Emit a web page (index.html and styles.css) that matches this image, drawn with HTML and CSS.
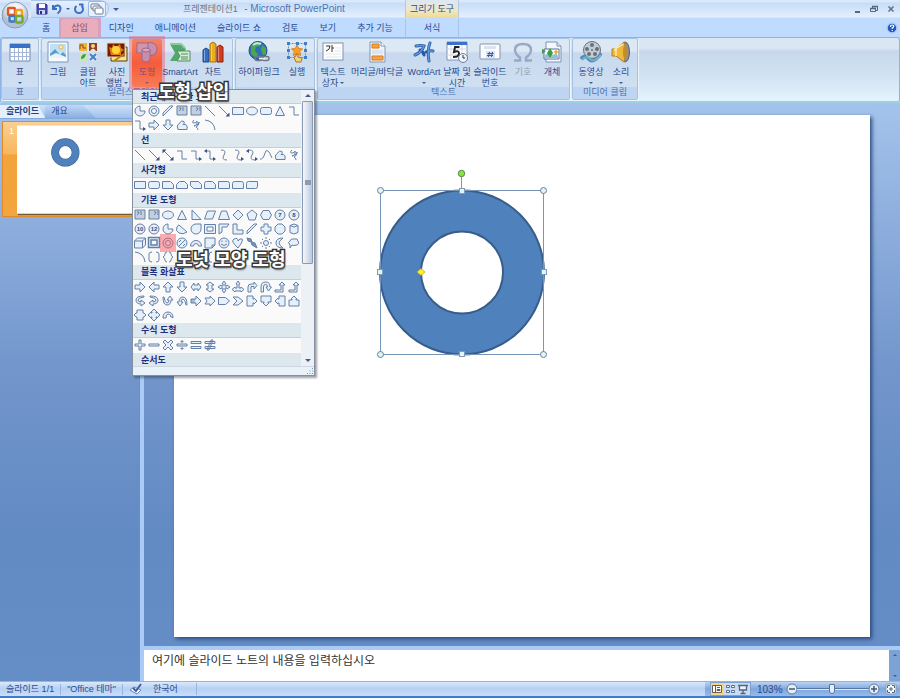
FILE: index.html
```html
<!DOCTYPE html>
<html lang="ko">
<head>
<meta charset="utf-8">
<title>프레젠테이션1 - Microsoft PowerPoint</title>
<link rel="stylesheet" href="styles.css">
</head>
<body>
<header class="titlebar">
  <button class="office" aria-label="Office 단추">
    <svg viewBox="0 0 28 28"><defs><radialGradient id="orb" cx=".5" cy=".3"><stop offset="0" stop-color="#fff"/><stop offset=".6" stop-color="#e9ecf2"/><stop offset="1" stop-color="#b4bfd0"/></radialGradient></defs><circle cx="14" cy="14" r="13" fill="url(#orb)" stroke="#8a9cb9"/><g fill="none" stroke-width="2.4"><rect x="7" y="7" width="7" height="7" rx="1" stroke="#e2571d"/><rect x="15" y="9" width="6" height="6" rx="1" stroke="#f2a120"/><rect x="8.500" y="15" width="5.500" height="5.500" rx="1" stroke="#3c79c9"/><rect x="15" y="15" width="6.500" height="6.500" rx="1" stroke="#6aae34"/></g></svg>
  </button>
  <div class="quick">
    <button aria-label="저장"><svg viewBox="0 0 12 12"><path d="M1 1h9l1 1v9H1z" fill="#4547b2" stroke="#303087"/><path d="M3 1h6v4H3z" fill="#fff"/><path d="M3 7h6v4H3z" fill="#c9d3ef"/><path d="M4 8h2v3H4z" fill="#303087"/></svg></button>
    <button aria-label="실행 취소"><svg viewBox="0 0 12 12"><path d="M2 2v4h4M2.500 5.500C5 1 10 2 9.500 6q-.3 3-3 4.500" fill="none" stroke="#3d6fc4" stroke-width="2"/></svg></button>
    <i class="arrow"></i>
    <button aria-label="다시 실행"><svg viewBox="0 0 12 12"><path d="M3.500 3A4 4 0 1 0 8.500 3M6 1.500h3.500V5" fill="none" stroke="#3d6fc4" stroke-width="2"/></svg></button>
    <button class="boxed" aria-label="도형 순서"><svg viewBox="0 0 14 12"><g fill="#fff" stroke="#687b99"><rect x="1" y="1" width="8" height="5" rx="1"/><rect x="3" y="3" width="8" height="5" rx="1"/><rect x="5" y="5" width="8" height="6" rx="1"/></g></svg></button>
  </div>
  <i class="arrow more"></i>
  <h1>프레젠테이션1 <span>- Microsoft PowerPoint</span></h1>
  <div class="window">
    <button aria-label="최소화"><svg viewBox="0 0 10 10"><path d="M3 8h5" stroke="#56677f" stroke-width="2"/></svg></button>
    <button aria-label="이전 크기로"><svg viewBox="0 0 10 10"><path d="M3.500 4V2.500h5v4H7M1.500 4.500h5v3h-5z" fill="none" stroke="#56677f"/><path d="M1 4.500h6M3 2.500h6" stroke="#56677f" stroke-width="1.500"/></svg></button>
    <button aria-label="닫기"><svg viewBox="0 0 10 10"><path d="M2.500 2.500l5 5m0-5l-5 5" stroke="#62738b" stroke-width="1.600"/></svg></button>
  </div>
</header>
<nav class="tabs">
  <button>홈</button><button class="active">삽입</button><button>디자인</button><button>애니메이션</button><button>슬라이드 쇼</button><button>검토</button><button>보기</button><button>추가 기능</button><button class="context"><span>그리기 도구</span>서식</button>
  <button class="help" aria-label="도움말"><svg viewBox="0 0 12 12"><circle cx="6" cy="6" r="5" fill="#1d59c8" stroke="#b9cbea" stroke-width="1.500"/><path d="M4.500 5q0-2 1.700-2t1.500 1.500Q7.500 5.500 6.200 6v1m0 1v1" fill="none" stroke="#fff" stroke-width="1.200"/></svg></button>
</nav>
<section class="ribbon">
  <div class="group">
    <div class="tools">
      <button class="tool wide"><svg viewBox="0 0 22 22"><path d="M1 3h20v17H1z" fill="#fff" stroke="#7089b3"/><path d="M1 3h20v4H1z" fill="#386fc7"/><path d="M1 11.500h20M1 15.500h20M5.500 7v13M9.500 7v13M13.500 7v13M17.500 7v13" stroke="#a5b8d6"/></svg><span>표</span><i class="arrow"></i></button>
    </div>
    <h2>표</h2>
  </div>
  <div class="group">
    <div class="tools">
      <button class="tool normal"><svg viewBox="0 0 22 22"><path d="M1 1h20v20H1z" fill="#f6fafe" stroke="#7f97ba"/><path d="M3 3h16v14H3z" fill="#bfe0f6"/><path d="M3 17v-4l5-5 5 6 3-3 3 3v3z" fill="#5b9bc9"/><path d="M3 17v-2l6-3 10 4v1z" fill="#e8f4fb"/><circle cx="14" cy="6" r="2" fill="#fff3a8" stroke="#e8b54a"/></svg><span>그림</span></button>
      <button class="tool small"><svg viewBox="0 0 22 22"><path d="M2 2h8v8H2z" fill="#f0b43b"/><path d="M3 8V4h3v3h3" fill="none" stroke="#8b4a10"/><path d="M12 2h8v8h-8z" fill="#913f1e"/><circle cx="16" cy="5" r="2" fill="#f7d489"/><path d="M13 10q3-5 6 0z" fill="#efe5d0"/><path d="M2 12h8v8H2z" fill="#c7e6bb"/><path d="M4 18q0-5 5-5-1 5-5 5z" fill="#3d9c47"/><path d="M12 12h8v8h-8z" fill="#d6e6f8"/><path d="M13 19l6-6m-6 0l6 6" stroke="#4b80c2" stroke-width="2"/></svg><span>클립<br>아트</span></button>
      <button class="tool"><svg viewBox="0 0 22 22"><path d="M5 6h16v14H5z" fill="#f9e68c" stroke="#514217"/><path d="M1 2h18v14H1z" fill="#741b08" stroke="#e4d5b0"/><path d="M3 6l3 1 1-4 3 3 4-3 1 4 3 2-3 2v3H5z" fill="#e37d14"/><circle cx="10" cy="9" r="4" fill="#ffd534"/><path d="M8 20l10-7" stroke="#b8860b" stroke-width="2"/></svg><span>사진<br>앨범<i class="arrow"></i></span></button>
      <button class="tool pressed"><svg viewBox="0 0 22 22"><g stroke="#5a78b2"><circle cx="14.500" cy="8" r="6.500" fill="#a8bcdc"/><rect x="1" y="2" width="11" height="10" fill="#b8c9e4"/><path d="M6 9v9q0 3 4 3t4-3V9z" fill="#a7bada"/><ellipse cx="10" cy="9" rx="4" ry="2" fill="#d4deef"/></g></svg><span>도형</span><i class="arrow"></i></button>
      <button class="tool wide"><svg viewBox="0 0 22 22"><path d="M1 3h11l5 5-5 7-3 5H1l5-8z" fill="#52a76a"/><path d="M1 3h11l4 4" fill="none" stroke="#8bcba0" stroke-width="2"/><path d="M8 10h13v10H8l3-5z" fill="#d8ead8" stroke="#4e8f5f"/><path d="M12 13h7m-7 3h7m-7 2h7" stroke="#4e8f5f"/></svg><span>SmartArt</span></button>
      <button class="tool"><svg viewBox="0 0 22 22"><path d="M1 9l3-2 3 2v12H1z" fill="#2f6fc4" stroke="#20498a"/><path d="M8 3l3-2 3 2v18H8z" fill="#e8ad20" stroke="#a97407"/><path d="M15 6l3-2 3 2v15h-6z" fill="#d43d20" stroke="#8d2310"/><path d="M2.500 9v11M9.500 3v17M16.500 6v14" stroke="#fff" opacity=".4"/></svg><span>차트</span></button>
    </div>
    <h2>일러스트레이션</h2>
  </div>
  <div class="group">
    <div class="tools">
      <button class="tool broad"><svg viewBox="0 0 22 22"><circle cx="10" cy="9.500" r="9" fill="#2f6fb7" stroke="#1f4e91"/><path d="M3 5q4-5 8-4l1 4-4 1-1 4 3 3-2 4-5-4zM14 4l4 3v6l-3 1-2-5z" fill="#4ca64a"/><path d="M5 4q4-3 8-1" stroke="#c9e8f7" stroke-width="2" fill="none"/><g fill="none" stroke="#6f7987" stroke-width="1.500"><rect x="7" y="15.500" width="7" height="4" rx="2"/><rect x="14" y="15.500" width="7" height="4" rx="2"/></g><path d="M11 17.500h6" stroke="#f0f3f8" stroke-width="1.500"/></svg><span>하이퍼링크</span></button>
      <button class="tool"><svg viewBox="0 0 22 22"><path d="M2.500 2.500h17v14h-17z" fill="none" stroke="#6b96c5" stroke-dasharray="2 1"/><path d="M11 4l1.700 3.500 4 .5-3 2.500 1 4-3.700-2-3.700 2 1-4-3-2.500 4-.5z" fill="#f89f2a" stroke="#dd8424"/><g fill="#3d7fc6"><path d="M1 1h3v3H1zM10 1h3v3h-3zM18 1h3v3h-3zM1 8h3v3H1zM18 8h3v3h-3zM1 15h3v3H1zM18 15h3v3h-3z"/></g><path d="M8 16l2-1v-2h2v3l4 1-1 4h-5z" fill="#f2d178" stroke="#a7772a"/></svg><span>실행</span></button>
    </div>
    <h2></h2>
  </div>
  <div class="group">
    <div class="tools">
      <button class="tool"><svg viewBox="0 0 22 22"><rect x="1" y="2" width="20" height="17" fill="#fff" stroke="#8091aa"/><path d="M4 5h4q0 4-4 5M10 4v7m0-4h2" fill="none" stroke="#333"/><path d="M13 7h6m-6 3h6M4 13h15M4 16h15" stroke="#dfe5ee"/></svg><span>텍스트<br>상자<i class="arrow"></i></span></button>
      <button class="tool broader"><svg viewBox="0 0 22 22"><path d="M4 1h11l4 4v16H4z" fill="#eef3fb" stroke="#8397b9"/><path d="M15 1v4h4" fill="#fff" stroke="#8397b9"/><path d="M6 3h7v4H6zM6 15h11v4H6z" fill="#f4a541" stroke="#d77d1c"/><path d="M6 10h11m-11 2h11" stroke="#c8d5e9"/></svg><span>머리글/바닥글</span></button>
      <button class="tool wide"><svg viewBox="0 0 22 22"><path d="M3 5q5-1 8 0-2 6-9 9m5-5q3 1 4 5M17 2q-3 7-1 18M13 11q4-2 7-1" fill="none" stroke="#285aa3" stroke-width="3" stroke-linecap="round"/><path d="M3 5q5-1 8 0-2 6-9 9M17 2q-3 7-1 18M16 10h4" fill="none" stroke="#5e95dc" stroke-width="1.600" stroke-linecap="round"/></svg><span>WordArt</span><i class="arrow"></i></button>
      <button class="tool"><svg viewBox="0 0 22 22"><path d="M1 1h20v18H1z" fill="#fff" stroke="#7f93b5"/><path d="M1 1h20v3H1z" fill="#3a70d0"/><path d="M5 4v15m11-15v15M1 8h20M1 14h20" stroke="#d0d7e4"/><path d="M13.500 6H9l-1 5q5-2 5 1.500T7 16" fill="none" stroke="#222" stroke-width="2"/><circle cx="17" cy="17" r="4.500" fill="#edf3fc" stroke="#6d7f9b"/><path d="M17 14v3h2" fill="none" stroke="#333"/></svg><span>날짜 및<br>시간</span></button>
      <button class="tool wide"><svg viewBox="0 0 22 22"><rect x="1" y="3" width="20" height="15" rx="1" fill="#fbfcff" stroke="#8192ae"/><path d="M5 5h12v3H5z" fill="#dbe3ef"/><path d="M7 10h9v7H7z" fill="#d5e2f6"/><path d="M10.500 11l-1 5m4-5l-1 5M8.500 12.500h6m-6.500 2h6" stroke="#345c97"/></svg><span>슬라이드<br>번호</span></button>
      <button class="tool" disabled><svg viewBox="0 0 22 22"><path d="M2 19.500h6v-3Q3 13 3 9q0-6 8-6t8 6q0 4-5 7.500v3h6" fill="none" stroke="#99a9c4" stroke-width="2.500"/></svg><span>기호</span></button>
      <button class="tool small"><svg viewBox="0 0 22 22"><path d="M5 1h11l4 4v16H5z" fill="#f4f7fd" stroke="#7f92b4"/><path d="M16 1v4h4" fill="#dde7f7" stroke="#7f92b4"/><path d="M3 8h15v10H3z" fill="#fff" stroke="#58729d"/><path d="M4 17v-3l4-3 4 3 3-2 2 3v2z" fill="#8cc3df"/><path d="M9 7l3 5-3 5-3-5zM1 8l4 2-4 3z" fill="#3c9d48"/><path d="M15 8l1 2 2 1-2 1-1 2-1-2-2-1 2-1z" fill="#f1ad2e"/></svg><span>개체</span></button>
    </div>
    <h2>텍스트</h2>
  </div>
  <div class="group">
    <div class="tools">
      <button class="tool wide"><svg viewBox="0 0 22 22"><path d="M1 18q4-5 8 0t12-6" fill="none" stroke="#4d91b4" stroke-width="4"/><circle cx="12" cy="9" r="8.500" fill="#c5cbd3" stroke="#68727e"/><g fill="#66717f"><circle cx="12" cy="4" r="2"/><circle cx="7" cy="8" r="2"/><circle cx="17" cy="8" r="2"/><circle cx="9" cy="13" r="2"/><circle cx="15" cy="13" r="2"/><circle cx="12" cy="9" r="1"/></g><path d="M2 19q4-5 8-1t11-4" fill="none" stroke="#6fb0d0" stroke-width="2"/></svg><span>동영상</span><i class="arrow"></i></button>
      <button class="tool narrow"><svg viewBox="0 0 22 22"><ellipse cx="15" cy="11" rx="4.500" ry="10" fill="#8c9098" stroke="#5b5f68"/><path d="M2 8h4l8-7q4 9 0 20l-8-6H2z" fill="#efb83a" stroke="#b87d18"/><path d="M6 8v7M4 9l9-6" stroke="#fff0ad" stroke-width="1.500"/><ellipse cx="15" cy="11" rx="2" ry="7" fill="#c28d2b"/></svg><span>소리</span><i class="arrow"></i></button>
    </div>
    <h2>미디어 클립</h2>
  </div>
</section>
<main class="workspace">
  <aside class="outline">
    <div class="panetabs"><button class="active">슬라이드</button><button>개요</button></div>
    <div class="thumb">
      <span>1</span>
      <svg viewBox="0 0 120 90" role="img" aria-label="슬라이드 1"><rect width="120" height="90" fill="#fff"/><circle cx="49.500" cy="27.500" r="10.500" fill="none" stroke="#385d8a" stroke-width="8"/><circle cx="49.500" cy="27.500" r="10.500" fill="none" stroke="#4f81bd" stroke-width="7"/></svg>
    </div>
  </aside>
  <div class="editor">
    <div class="stage">
      <div class="slide">
        <svg viewBox="0 0 696 522" role="img" aria-label="도넛 모양 도형">
          <circle cx="288" cy="157.500" r="61.500" fill="none" stroke="#385d8a" stroke-width="43"/>
          <circle cx="288" cy="157.500" r="61.500" fill="none" stroke="#4f81bd" stroke-width="39"/>
          <path d="M206.500 75.500h163v164h-163zM287.500 75V59" fill="none" stroke="#7896b8"/>
          <g fill="#e3f3f7" stroke="#668198"><circle cx="206.500" cy="75.500" r="3"/><circle cx="369.500" cy="75.500" r="3"/><circle cx="206.500" cy="239.500" r="3"/><circle cx="369.500" cy="239.500" r="3"/></g>
          <g fill="#e3f5fb" stroke="#7e9db6"><rect x="285.500" y="73.500" width="5" height="5"/><rect x="285.500" y="236.500" width="5" height="5"/><rect x="203.500" y="154.500" width="5" height="5"/><rect x="367.500" y="154.500" width="5" height="5"/></g>
          <circle cx="287.500" cy="58.500" r="3.200" fill="#87e83b" stroke="#5d8052"/>
          <path d="M247 153.500l4 3.500-4 3.500-4-3.500z" fill="#ffed25" stroke="#b19b35" stroke-width=".7"/>
        </svg>
      </div>
    </div>
    <div class="notes"><textarea aria-label="슬라이드 노트">여기에 슬라이드 노트의 내용을 입력하십시오</textarea><div class="notescroll"><i class="up"></i><i class="arrow"></i></div></div>
  </div>
</main>
<footer class="status">
  <span class="cell">슬라이드 1/1</span><span class="cell">"Office 테마"</span>
  <span class="cell lang"><svg viewBox="0 0 14 12"><path d="M1 7l4-3 7 3-4 4z" fill="#fff" stroke="#6b83ac"/><path d="M4 5l3 3 5-7" fill="none" stroke="#3b5fa8" stroke-width="2"/></svg>한국어</span>
  <div class="zoom">
    <div class="views">
      <button class="on" aria-label="기본"><svg viewBox="0 0 12 12"><path d="M1.500 2.500h9v7h-9zM4.500 2.500v7M6 4.500h3m-3 2h3v1H6z" fill="#fff" stroke="#665f50"/></svg></button>
      <button aria-label="여러 슬라이드"><svg viewBox="0 0 12 12"><path d="M2.500 2.500h3v2h-3zM7.500 2.500h3v2h-3zM2.500 7.500h3v2h-3zM7.500 7.500h3v2h-3z" fill="#fff" stroke="#596c8a"/></svg></button>
      <button aria-label="슬라이드 쇼"><svg viewBox="0 0 12 12"><path d="M1 2.500h10M2.500 3v4h7V3M6 7v3M3.500 10.500h5" fill="#eef4fc" stroke="#52647f" stroke-width="1.300"/></svg></button>
    </div>
    <output>103%</output>
    <button class="round" aria-label="축소"><svg viewBox="0 0 12 12"><circle cx="6" cy="6" r="5" fill="#e4edf8" stroke="#627a9d"/><path d="M3 6h6" stroke="#415778" stroke-width="1.500"/></svg></button>
    <input type="range" min="0" max="100" value="49" aria-label="확대/축소">
    <button class="round" aria-label="확대"><svg viewBox="0 0 12 12"><circle cx="6" cy="6" r="5" fill="#e4edf8" stroke="#627a9d"/><path d="M3 6h6M6 3v6" stroke="#415778" stroke-width="1.500"/></svg></button>
    <button class="round fit" aria-label="창에 맞춤"><svg viewBox="0 0 12 12"><rect x="1" y="1" width="10" height="10" rx="1" fill="#f7fafe" stroke="#8799b4"/><path d="M2.500 5V2.500H5M7 2.500h2.500V5M9.500 7v2.500H7M5 9.500H2.500V7M5 5h2v2H5z" fill="none" stroke="#53657e"/></svg></button>
  </div>
</footer>
<section class="gallery" aria-label="도형 목록">
  <div class="body">
    <div class="list" id="list"></div>
    <div class="scroll"><i class="up"></i><div class="track"><div class="bar"></div></div><i class="arrow"></i></div>
  </div>
  <div class="grip"><svg viewBox="0 0 8 8"><path d="M6 1h1v1H6zM6 3.500h1v1H6zM3.500 3.500h1v1h-1zM6 6h1v1H6zM3.500 6h1v1h-1zM1 6h1v1H1z" fill="#8396b5"/></svg></div>
  <strong class="callout insert">도형 삽입</strong>
  <strong class="callout donut">도넛 모양 도형</strong>
</section>
<script src="gallery.js"></script>
</body>
</html>
```
FILE: styles.css
```css
* { box-sizing: border-box; }
body {
  margin: 0; height: 100vh; min-height: 480px; display: flex; flex-direction: column; overflow: hidden; position: relative;
  font: 9px/11px "Liberation Sans", "Noto Sans CJK KR", sans-serif; color: #2a4a8e; background: #bfdbff;
}
button { font: inherit; color: inherit; background: none; border: 0; padding: 0; margin: 0; }
svg { display: block; }
h1, h2, h3 { margin: 0; font: inherit; }
.arrow, .up { display: inline-block; width: 0; height: 0; border: 2px solid transparent; }
.arrow { border-top-color: #3f5d91; border-bottom: 0; }
.up { border-bottom-color: #3f5d91; border-top: 0; }

.titlebar {
  height: 18px; flex: none; display: flex; align-items: center; padding: 0 4px 0 31px;
  background: linear-gradient(#d9e8fa 0 2px, #c6dcf7 3px, #e3effd 17px, #c3dafa 18px);
}
.office { position: absolute; left: 1px; top: 1px; z-index: 2; }
.office svg { width: 28px; height: 28px; }
.quick { display: flex; align-items: center; gap: 3px; width: 78px; height: 18px; padding-left: 5px; border: 1px solid #abc5e9; border-left: 0; border-radius: 0 9px 9px 0; background: linear-gradient(#e6f0fd, #c5daf5); }
.quick svg { width: 12px; height: 12px; }
.quick .boxed { border: 1px solid #9bb7df; border-radius: 2px; background: #e8f1fd; padding: 1px; }
.quick .boxed svg { width: 14px; }
.more { margin-left: 4px; border-width: 3px; border-bottom: 0; }
h1 { margin-left: 64px; flex: 1; color: #6e7683; white-space: nowrap; }
h1 span { font-size: 10px; color: #4c76b4; margin-left: 4px; }
.window { display: flex; gap: 7px; }
.window svg { width: 10px; height: 10px; }

.tabs { height: 19px; flex: none; display: flex; gap: 1px; padding: 1px 2px 0 32px; }
.tabs button { padding: 0 10px; white-space: nowrap; }
.tabs .active { position: relative; border-radius: 3px 3px 0 0; background: #e6effb; }
.tabs .active::after, .pressed::after { content: ""; position: absolute; background: rgba(240, 80, 100, .42); }
.tabs .active::after { inset: -1px -3px 0 -2px; }
.tabs .context { position: relative; margin-left: 1px; padding: 0 18px; border: solid #a9c4e8; border-width: 0 1px; }
.context span {
  position: absolute; left: -1px; right: -1px; top: -19px; height: 18px; padding-top: 4px; text-align: center;
  border: solid #b8c9dc; border-width: 0 1px; background: linear-gradient(#dce8f6, #efe7c4 60%, #f2d98c);
}
.tabs .help { margin-left: auto; padding: 0; }
.help svg { width: 12px; height: 12px; }

.ribbon {
  height: 66px; flex: none; display: flex; gap: 2px; padding: 0 1px 1px 0;
  border: 1px solid #8fb3e4; border-bottom: 2px solid #9dd0e2; border-radius: 3px;
  background: linear-gradient(#dbe6f4 0 10px, #c7d8ec 13px, #d3e3f3 40px, #e3f4fd);
}
.group { display: flex; flex-direction: column; border: 1px solid #a6c2e2; border-radius: 2px; background: linear-gradient(#dde8f5 0 12px, #c8d9ee 14px, #d2e2f4); box-shadow: 1px 1px 0 #eaf3fc; }
.tools { display: flex; flex: 1; min-height: 0; }
.group:nth-child(2) .tools { padding-right: 4px; }
.group:nth-child(3) .tools { padding-right: 2px; }
.group:nth-child(4) .tools { padding-right: 3px; }
.group:nth-child(5) .tools { padding-right: 4px; }
.group h2 { height: 12px; flex: none; text-align: center; background: #bdd5f2; color: #4a70ac; }
.tool { position: relative; display: flex; flex-direction: column; align-items: center; width: 30px; padding-top: 2px; white-space: nowrap; }
.tool svg { width: 22px; height: 22px; flex: none; margin-bottom: 4px; }
.tool > .arrow { margin-top: 4px; }
.tool span .arrow { margin: 0 0 2px 2px; }
.small { width: 28px; }
.normal { width: 32px; }
.wide { width: 36px; }
.broad { width: 46px; }
.broader { width: 58px; }
.narrow { width: 24px; }
.tool:disabled { color: #94a0b3; }
.pressed { background: linear-gradient(#fda463, #f9641f 50%, #ff9b4c); border-radius: 2px; }
.pressed::after { inset: -3px -3px -2px -3px; }

.workspace { flex: 1; min-height: 0; display: flex; background: linear-gradient(#a4c3ec, #7396cc 45%, #628ac3 75%, #658dc6); }
.outline { width: 144px; flex: none; padding-top: 2px; border-right: 4px solid #a9cbf6; box-shadow: inset -1px 0 #668fc8; }
.panetabs { display: flex; height: 14px; background: linear-gradient(#cfe1f8, #9fc0ec); border-bottom: 1px solid #82a8dc; color: #274480; }
.panetabs button { padding: 0 28px 0 6px; background: linear-gradient(#bfd8f7, #87aee1); clip-path: polygon(0 0, 75% 0, 100% 100%, 0 100%); }
.panetabs .active { padding-right: 6px; font-weight: bold; background: #e4effc; clip-path: polygon(0 0, 85% 0, 100% 100%, 0 100%); }
.thumb { display: flex; margin: 2px 2px 0; height: 96px; padding: 3px; border: 1px solid #e08a2b; background: linear-gradient(#f9cf91, #f8b65b 34%, #f2a33b 35%, #f3a63e); color: #fff; }
.thumb span { width: 11px; padding-top: 1px; text-align: center; }
.thumb svg { width: 119px; height: 89px; box-shadow: 1px 1px 1px #765a36; }

.editor { flex: 1; min-width: 0; display: flex; flex-direction: column; }
.stage { flex: 1; min-height: 0; display: flex; padding: 12px 30px 9px; }
.slide { flex: 1; background: #fff; box-shadow: 2px 2px 4px #294a79; overflow: hidden; }
.slide svg { width: 100%; }
.notes { height: 35px; flex: none; display: flex; border-top: 4px solid #a9cbf6; }
textarea { flex: 1; border: 0; resize: none; outline: 0; margin: 0; padding: 3px 8px; font: 12px/16px "Liberation Sans", "Noto Sans CJK KR", sans-serif; color: #333; background: #fff; overflow: hidden; }
.notescroll { width: 11px; background: #7da2d5; display: flex; flex-direction: column; justify-content: space-between; align-items: center; padding: 4px 0; }

.status { height: 17px; flex: none; display: flex; align-items: center; border-top: 1px solid #91b4e3; border-bottom: 2px solid #3d7bd1; background: linear-gradient(#dbe9fb, #b7d1f3 45%, #c9def8); }
.cell { padding: 0 6px; border-right: 1px solid #98b6e0; white-space: nowrap; }
.lang { display: flex; align-items: center; gap: 10px; width: 74px; }
.lang svg { width: 14px; height: 12px; }
.zoom { margin-left: auto; display: flex; align-items: center; height: 100%; padding: 0 3px 0 5px; background: linear-gradient(#bad3f3, #7fa6db 50%, #98bbe9); }
.views { display: flex; border: 1px solid #80a0cf; background: #c7dbf5; }
.views button { width: 13px; height: 12px; }
.views svg, .round svg { width: 12px; height: 12px; }
.views .on { background: #fbd37d; }
output { font-size: 10px; width: 35px; padding-left: 6px; }
.zoom input { appearance: none; width: 72px; height: 12px; margin: 0 -1px; background: linear-gradient(transparent 5px, #5578aa 5px 6px, #d7e6fa 6px 7px, transparent 7px); }
.zoom input::-webkit-slider-thumb { appearance: none; width: 6px; height: 10px; border: 1px solid #58729c; border-radius: 1px 1px 3px 3px; background: #e6eefa; }
.fit { margin-left: 5px; }

.gallery { position: absolute; left: 132px; top: 89px; width: 183px; z-index: 3; border: 1px solid #868f9c; background: #fafafa; box-shadow: 2px 2px 2px rgba(40, 50, 70, .45); }
.body { display: flex; height: 276px; }
.list { flex: 1; overflow: hidden; }
.list h3 { height: 15px; padding: 2px 0 0 8px; background: #dde7ee; border-bottom: 1px solid #c5cfd9; color: #1f2f7d; font-weight: bold; }
.list h3:first-child { height: 14px; }
.row { display: grid; grid-template-columns: repeat(12, 14px); padding-bottom: 1px; }
.row button { height: 14px; padding: 1px; }
.row svg { width: 12px; height: 12px; fill: #e6f0fa; stroke: #6480a8; overflow: visible; }
.row .marked { position: relative; }
.marked::after { content: ""; position: absolute; inset: -2px -1px; background: rgba(250, 92, 100, .5); }
.scroll { width: 13px; display: flex; flex-direction: column; align-items: center; gap: 4px; padding: 4px 0; background: #edf0f4; }
.scroll .arrow, .scroll .up { border-left-width: 3px; border-right-width: 3px; flex: none; }
.scroll .arrow { border-top-width: 3px; }
.scroll .up { border-bottom-width: 3px; }
.track { flex: 1; width: 11px; }
.bar { height: 64%; border: 1px solid #899ab7; border-radius: 1px; background: linear-gradient(#8d9ab0, #8d9ab0) center/6px 5px no-repeat, linear-gradient(90deg, #f5f8fc, #bac9df); }
.grip { height: 9px; display: flex; justify-content: flex-end; border-top: 1px solid #ced6df; background: #eaf2f9; }
.grip svg { width: 8px; height: 8px; }
.callout { position: absolute; font: bold 18px/22px "Noto Sans CJK KR", sans-serif; color: #fff; -webkit-text-stroke: 3px #333; paint-order: stroke fill; white-space: nowrap; text-shadow: 1px 2px 2px #555; }
.insert { left: 25px; top: -11px; }
.donut { left: 43px; top: 157px; }
```
FILE: gallery.js
```js
const p = (d, extra = "") => `<path d="${d}" ${extra}/>`;
const open = (d) => p(d, 'fill="none"');
const dark = (d) => p(d, 'fill="#3a5382" stroke="none"');
const turn = (angle, s) => `<g transform="rotate(${angle} 6 6)">${s}</g>`;
const flip = (s) => `<g transform="translate(12 0) scale(-1 1)">${s}</g>`;
const ring = (inside) => `<circle cx="6" cy="6" r="5"/>${inside}`;
const digit = (n) => ring(`<text x="6" y="8" text-anchor="middle" font-size="6" font-weight="bold" fill="#344f7c" stroke="none">${n}</text>`);

const line = open("M1 1l10 10");
const tip = dark("M11.500 11.500H7.500l4-4z");
const tail = dark("M.5 .5h4l-4 4z");
const elbow = "M1 2h5v8h5";
const curve = "M3 1q6 0 3 5t3 5";
const elbowTip = dark("M12 10L9 8v4z");
const elbowTail = dark("M0 2l3-2v4z");
const arrow = p("M1 4h5V1l5 5-5 5V8H1z");
const both = p("M1 6l3-4v2h4V2l3 4-3 4V8H4v2z");
const bent = p("M2 11V6q0-3 3-3h3V1l3 3.500L8 8V5.500H5V11z");
const uturn = p("M1 11V6q0-5 4.500-5T10 6h1.500L8.500 10 6 6h1.500q0-2.500-2-2.500T3.500 6v5z");
const curved = p("M10 1Q2 1 2 5t5 4v2l4-3-4-3v2Q4 7 4 5t6-3z");
const callout = p("M1 1h6v3h1V3l3 3-3 3V8H7v3H1z");
const text = p("M1 1h10v9H1z", 'fill="#c4cfde"') + open("M3 3h2q0 2-2 3M7 2v4");
const vtext = p("M1 1h10v9H1z", 'fill="#c4cfde"') + open("M6 3h2q0 2-2 3M10 2v4");
const pie = p("M6 1v5h5A5 5 0 1 1 6 1z");
const donut = ring('<circle cx="6" cy="6" r="2.500" fill="#fff"/>');
const stripe = p("M1 11V8l7-7h3z");
const rect = p("M.5 2.500h11v7H.5z");
const round = '<rect x=".5" y="2.500" width="11" height="7" rx="2"/>';
const oval = '<ellipse cx="6" cy="6" rx="5.500" ry="4"/>';
const triangle = p("M6 1.500l4.500 9h-9z");
const free = p("M2 10.500q-2-4 1-6 3-4 5-2 1 2-1 3 5-1 4 5z");
const scribble = open("M4 1q-3 3 0 3t3-2q1 4-3 5 6-2 5-4 0 4-3 5 2 1 2 3");
const arc = open("M1 1q9 1 10 10");
const snip = p("M.5 2.500h8l3 3v4H.5z");
const plus = p("M4 1h4v3h3v4H8v3H4V8H1V4h3z");
const brace = open("M5 1q-2 0-2 2t-2 3q2 1 2 3t2 2M7 1q2 0 2 2t2 3q-2 1-2 3t-2 2");

const sections = [
  ["최근에 사용한 도형", [pie, donut, stripe, text, vtext, line, line + tip, rect, oval, round, triangle, open(elbow),
    open(elbow) + elbowTip, arrow, turn(90, arrow), free, scribble, arc]],
  ["선", [line, line + tip, line + tip + tail, open(elbow), open(elbow) + elbowTip, open(elbow) + elbowTip + elbowTail,
    open(curve), open(curve) + elbowTip, open(curve) + elbowTip + elbowTail, open("M0 10q3 1 5-6t7 5"), free, scribble]],
  ["사각형", [rect, round, snip, p("M.5 9.500v-4l3-3h5l3 3v4z"), p("M.5 2.500h8l3 3v4h-8l-3-3z"), p("M.5 9.500v-5q0-2 2-2h6l3 3v4z"),
    p("M.5 2.500h9q2 0 2 2v5H.5z"), p("M.5 9.500v-5q0-2 2-2h7q2 0 2 2v5z"), p("M2.500 2.500h9v5q0 2-2 2h-9v-5q0-2 2-2z")]],
  ["기본 도형", [text, vtext, oval, triangle, p("M2 1v9.500h9z"), p("M3.500 2h8l-3 8H.5z"), p("M3.500 2h5l3 8.500H.5z"), p("M6 1l5 5-5 5-5-5z"),
    p("M6 1l5 4-2 6H3L1 5z"), p("M3 1.500h6L11.500 6 9 10.500H3L.5 6z"), digit(7), digit(8),
    digit(10), digit(12), pie, p("M3 2l8 7q-4 3-8 1t-2-6q1-2 2-2z"), p("M6 1h5v5a5 5 0 1 1-5-5z"), p("M.5 1.500h11v9H.5zM3 4v4h6V4z"),
    p("M1 1h10L9 4H4v5l-3 2z"), p("M1 1h4v6h6v4H1z"), stripe, plus, p("M4 1h4l3 3v4l-3 3H4L1 8V4z"), p("M2 2.500q4-3 8 0v7q-4 3-8 0zq4 3 8 0"),
    p("M.5 4l3-3h8v7l-3 3h-8zM.5 4h8v7m0-7l3-3"), p("M.5 .5h11v10H.5zM3 3v5h6V3z", 'stroke-width="1.500"'), donut, ring(open("M3 9l6-6M3 5l2-2M7 9l2-2")),
    p("M.5 9a5.500 5.500 0 0 1 11 0h-3a2.500 2.500 0 0 0-5 0z"), p("M1 1h10v7l-3 3H1zM8 11V8h3"), ring(open("M3 7q3 3 6 0M4 3.500v1.500m4-1.500v1.500")),
    p("M6 11Q-2 4 2 2t4 2q2-3 4-2t-4 9z"), p("M1 1l4 1 1 3 3 1 2 5-5-3-1-3-3-1z", 'fill="#7890b2"'), '<circle cx="6" cy="6" r="2.500"/>' + open("M6 0v2M6 10v2M0 6h2M10 6h2M2 2l1 1M9 9l1 1M2 10l1-1M9 3l1-1"),
    p("M9 1Q2 1 2 6t7 5Q5 8 5 6t4-5z"), p("M2 8Q-1 5 2 4q1-3 4-2 4-1 4 2 2 3-1 4-4 1-5 0l-2 3z"),
    arc, open("M4 1Q1 1 1 3v6q0 2 3 2M8 1q3 0 3 2v6q0 2-3 2"), brace, open("M8 1Q4 1 4 3v6q0 2 4 2"), open("M4 1q4 0 4 2v6q0 2-4 2"), open("M8 1Q5 1 5 4T3 6q2 0 2 3t3 2")]],
  ["블록 화살표", [arrow, turn(180, arrow), turn(-90, arrow), turn(90, arrow), both, turn(90, both),
    p("M6 0l2 3H7v2h2V4l3 2-3 2V7H7v2h1l-2 3-2-3h1V7H3v1L0 6l3-2v1h2V3H4z"), p("M6 0l2 3H7v4h2V6l3 2.500L9 11v-1H3v1L0 8.500 3 6v1h2V3H4z"), bent, uturn,
    p("M1 11V9h6V4H5l3-3 3 3H9v7z"), p("M1 11V9h6V4H5l3-3 3 3H9v7z"),
    curved, flip(curved), turn(-90, curved), turn(90, curved), arrow + open("M2 4v4M4 4v4"), p("M1 3h5V1l5 5-5 5V9H1l2-3z"), p("M.5 2.500h7l4 3.500-4 3.500h-7z"), p("M1 2h5l5 4-5 4H1l4-4z"),
    callout, turn(90, callout), turn(180, callout), turn(-90, callout),
    p("M3 1h6v3h1l2 2-2 2H9v3H3V8H2L0 6l2-2h1z"), p("M4 4V3H3l3-3 3 3H8v1h1V3l3 3-3 3V8H8v1h1l-3 3-3-3h1V8H3v1L0 6l3-3v1z"), p("M1 9q0-6 5-6t5 6l-3-2h1Q8 5 6 5T4 9z")]],
  ["수식 도형", [p("M5 1h2v4h4v2H7v4H5V7H1V5h4z"), p("M1 5h10v2H1z"), p("M3 1l3 3 3-3 2 2-3 3 3 3-2 2-3-3-3 3-2-2 3-3-3-3z"), p("M1 5h10v2H1zM5 2h2v1H5zM5 9h2v1H5z"),
    p("M1 2.500h10v2H1zM1 7.500h10v2H1z"), p("M1 2.500h10v2H1zM1 7.500h10v2H1zM3 11l4-10h2L5 11z")]],
  ["순서도", []]
];

document.getElementById("list").innerHTML = sections.map(([title, shapes]) =>
  `<h3>${title}</h3><div class="row">${shapes.map((shape, i) =>
    `<button class="${title === "기본 도형" && shape === donut ? "marked" : ""}" aria-label="${title} ${i + 1}"><svg viewBox="0 0 12 12">${shape}</svg></button>`).join("")}</div>`
).join("");
```
